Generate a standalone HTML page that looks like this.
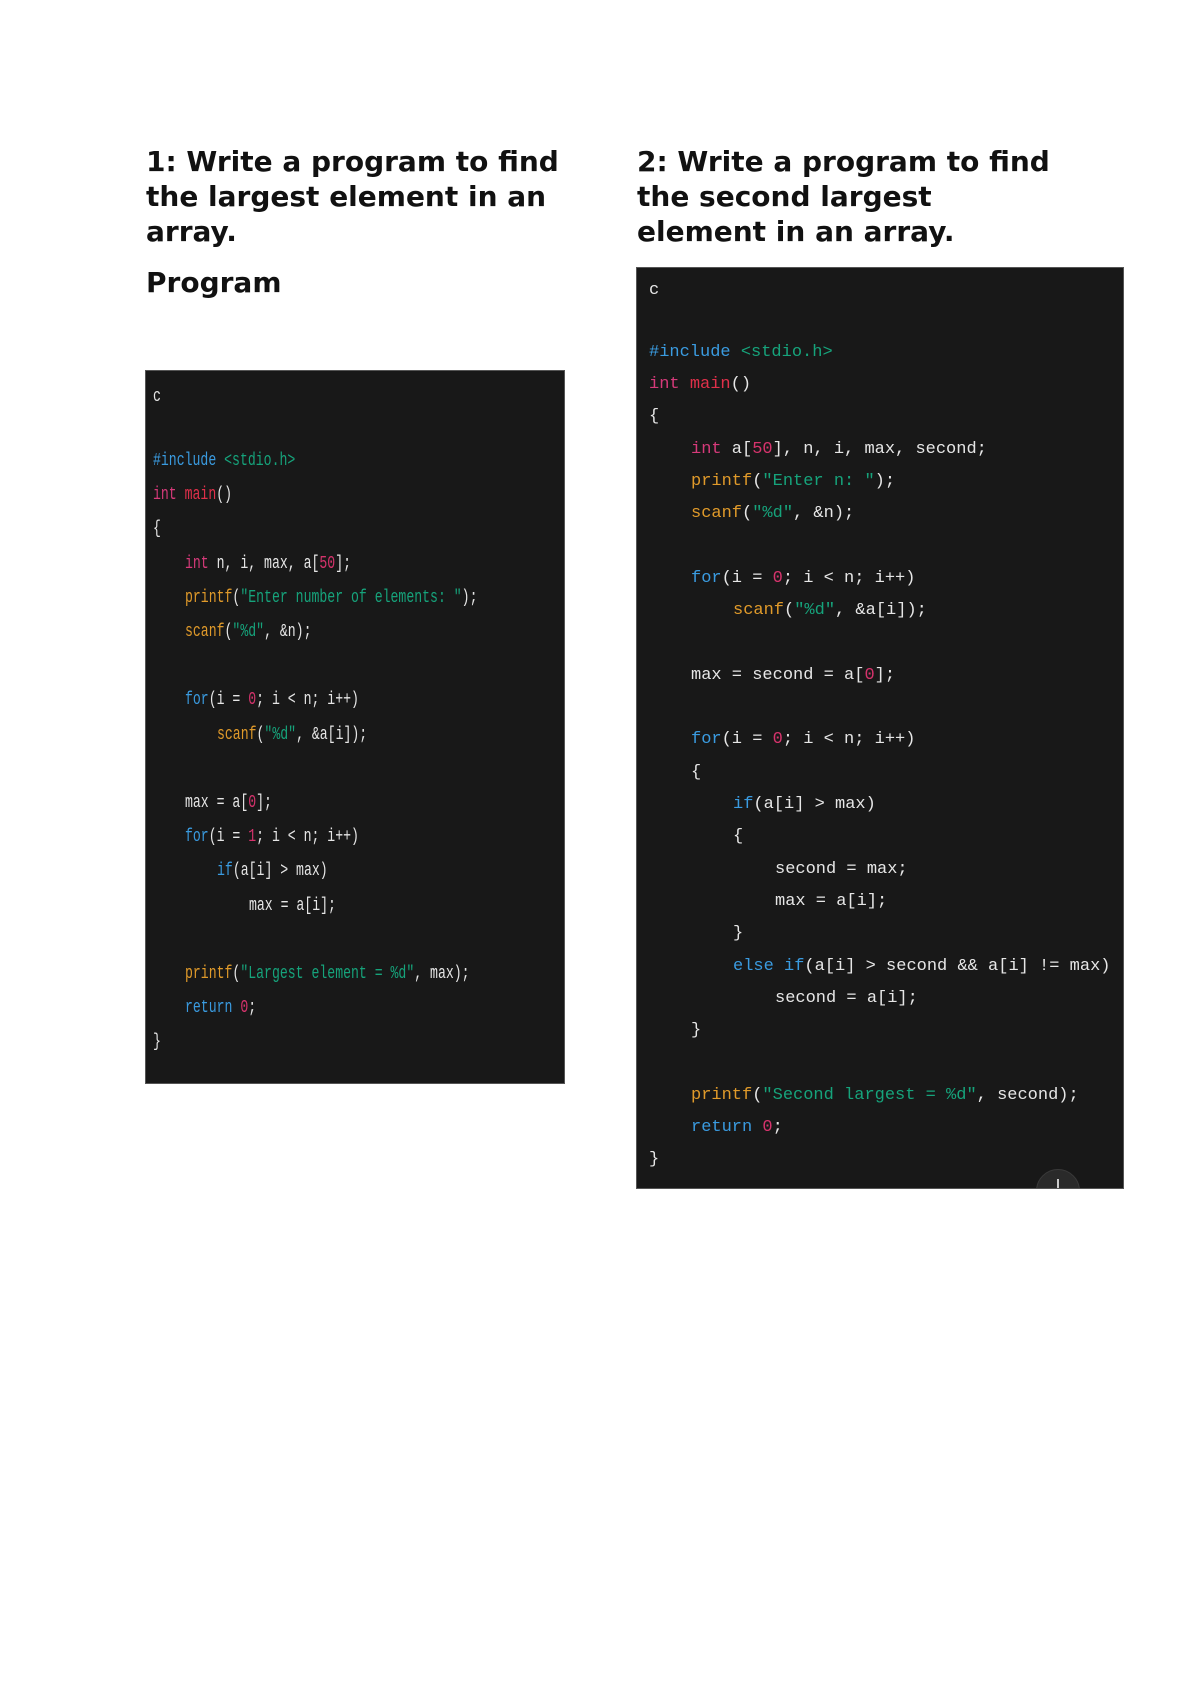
<!DOCTYPE html>
<html><head><meta charset="utf-8"><style>
html,body{margin:0;padding:0;background:#fff;}
body{width:1200px;height:1696px;position:relative;overflow:hidden;}
.h{position:absolute;font-family:"DejaVu Sans","Liberation Sans",sans-serif;font-weight:bold;font-size:28px;color:#111;white-space:nowrap;line-height:35px;}
.blk{position:absolute;background:#181818;border:1px solid #555;overflow:hidden;}
.l{position:absolute;font-family:"Liberation Mono","DejaVu Sans Mono",monospace;font-size:17px;color:#e6e6e6;white-space:pre;line-height:20px;}
.n{font-size:18.5px;transform:scaleX(.712);transform-origin:0 50%;}
.k{color:#d63a7a}.m{color:#e0304a}.b{color:#3a9be0}.s{color:#16a37b}.f{color:#e09a2a}.g{color:#16a37b}.c{color:#d6336c}.w{color:#f0f0f0}
</style></head><body>
<div class="h" style="left:146px;top:144px">1: Write a program to find<br>the largest element in an<br>array.</div>
<div class="h" style="left:146px;top:265px">Program</div>
<div class="h" style="left:637px;top:144px">2: Write a program to find<br>the second largest<br>element in an array.</div>

<div class="blk" style="left:145px;top:370px;width:418px;height:712px">
<div class="l n" style="left:7px;top:16px">c</div>
<div class="l n" style="left:7px;top:80px"><span class="b">#include</span> <span class="s">&lt;stdio.h&gt;</span></div>
<div class="l n" style="left:7px;top:114px"><span class="k">int</span> <span class="m">main</span>()</div>
<div class="l n" style="left:7px;top:148px">{</div>
<div class="l n" style="left:39px;top:183px"><span class="k">int</span> n, i, max, a[<span class="c">50</span>];</div>
<div class="l n" style="left:39px;top:217px"><span class="f">printf</span>(<span class="s">"Enter number of elements: "</span>);</div>
<div class="l n" style="left:39px;top:251px"><span class="f">scanf</span>(<span class="s">"%d"</span>, &amp;n);</div>
<div class="l n" style="left:39px;top:319px"><span class="b">for</span>(i = <span class="c">0</span>; i &lt; n; i++)</div>
<div class="l n" style="left:71px;top:354px"><span class="f">scanf</span>(<span class="s">"%d"</span>, &amp;a[i]);</div>
<div class="l n" style="left:39px;top:422px">max = a[<span class="c">0</span>];</div>
<div class="l n" style="left:39px;top:456px"><span class="b">for</span>(i = <span class="c">1</span>; i &lt; n; i++)</div>
<div class="l n" style="left:71px;top:490px"><span class="b">if</span>(a[i] &gt; max)</div>
<div class="l n" style="left:103px;top:525px">max = a[i];</div>
<div class="l n" style="left:39px;top:593px"><span class="f">printf</span>(<span class="s">"Largest element = %d"</span>, max);</div>
<div class="l n" style="left:39px;top:627px"><span class="b">return</span> <span class="c">0</span>;</div>
<div class="l n" style="left:7px;top:661px">}</div>
</div>

<div class="blk" style="left:636px;top:267px;width:486px;height:920px">
<div class="l" style="left:12px;top:13px">c</div>
<div class="l" style="left:12px;top:75px"><span class="b">#include</span> <span class="s">&lt;stdio.h&gt;</span></div>
<div class="l" style="left:12px;top:107px"><span class="k">int</span> <span class="m">main</span>()</div>
<div class="l" style="left:12px;top:139px">{</div>
<div class="l" style="left:54px;top:172px"><span class="k">int</span> a[<span class="c">50</span>], n, i, max, second;</div>
<div class="l" style="left:54px;top:204px"><span class="f">printf</span>(<span class="s">"Enter n: "</span>);</div>
<div class="l" style="left:54px;top:236px"><span class="f">scanf</span>(<span class="s">"%d"</span>, &amp;n);</div>
<div class="l" style="left:54px;top:301px"><span class="b">for</span>(i = <span class="c">0</span>; i &lt; n; i++)</div>
<div class="l" style="left:96px;top:333px"><span class="f">scanf</span>(<span class="s">"%d"</span>, &amp;a[i]);</div>
<div class="l" style="left:54px;top:398px">max = second = a[<span class="c">0</span>];</div>
<div class="l" style="left:54px;top:462px"><span class="b">for</span>(i = <span class="c">0</span>; i &lt; n; i++)</div>
<div class="l" style="left:54px;top:495px">{</div>
<div class="l" style="left:96px;top:527px"><span class="b">if</span>(a[i] &gt; max)</div>
<div class="l" style="left:96px;top:559px">{</div>
<div class="l" style="left:138px;top:592px">second = max;</div>
<div class="l" style="left:138px;top:624px">max = a[i];</div>
<div class="l" style="left:96px;top:656px">}</div>
<div class="l" style="left:96px;top:689px"><span class="b">else if</span>(a[i] &gt; second &amp;&amp; a[i] != max)</div>
<div class="l" style="left:138px;top:721px">second = a[i];</div>
<div class="l" style="left:54px;top:753px">}</div>
<div class="l" style="left:54px;top:818px"><span class="f">printf</span>(<span class="s">"Second largest = %d"</span>, second);</div>
<div class="l" style="left:54px;top:850px"><span class="b">return</span> <span class="c">0</span>;</div>
<div class="l" style="left:12px;top:882px">}</div>
<div style="position:absolute;left:399px;top:901px;width:42px;height:42px;border-radius:50%;background:#2a2a2a;border:1px solid #3a3a3a"></div>
<div style="position:absolute;left:420px;top:911px;width:2px;height:12px;background:#ccc"></div>
</div>
</body></html>
